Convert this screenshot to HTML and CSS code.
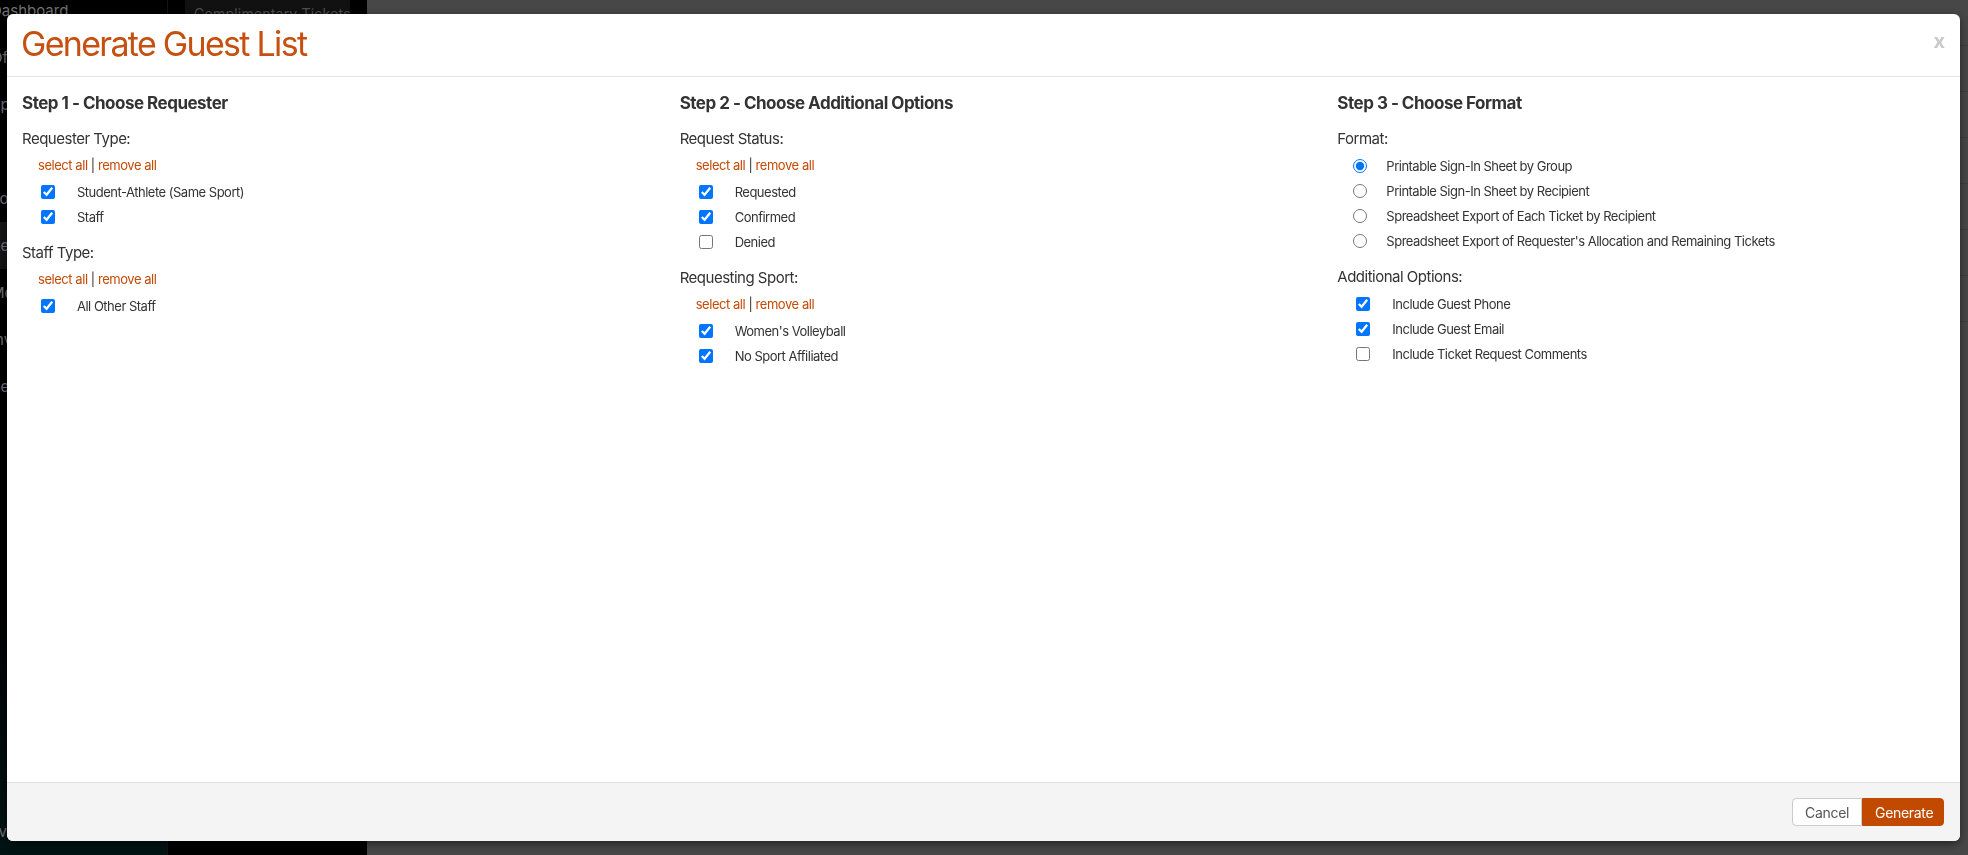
FILE: index.html
```html
<!DOCTYPE html>
<html lang="en">
<head>
<meta charset="utf-8">
<title>Generate Guest List</title>
<link rel="stylesheet" href="styles.css">
</head>
<body>
<div class="page">
  <aside class="sidebar">
    <ul class="side-list">
      <li>Dashboard</li>
      <li>Offline Sales</li>
      <li>Split Tickets</li>
      <li></li>
      <li>Tools</li>
      <li class="active">Reports</li>
      <li>Members</li>
      <li>Inventory</li>
      <li>Settings</li>
    </ul>
    <div class="side-foot">Overview</div>
  </aside>
  <nav class="subnav">
    <div class="tab">Complimentary Tickets</div>
  </nav>
  <main class="main">
    <div class="bg-row"></div>
    <div class="bg-row"></div>
    <div class="bg-row"></div>
    <div class="bg-row"></div>
    <div class="bg-row"></div>
    <div class="bg-row"></div>
    <div class="bg-row"></div>
  </main>
</div>

<div class="modal">
  <header class="modal-header">
    <h1 class="modal-title">Generate Guest List</h1>
    <span class="close">x</span>
  </header>
  <section class="modal-body">
    <div class="col">
      <h4 class="step">Step 1 - Choose Requester</h4>
      <div class="group">
        <div class="group-label">Requester Type:</div>
        <div class="links"><a>select all</a> <span class="bar">|</span> <a>remove all</a></div>
        <ul class="opts">
          <li><input type="checkbox" checked><span>Student-Athlete (Same Sport)</span></li>
          <li><input type="checkbox" checked><span>Staff</span></li>
        </ul>
      </div>
      <div class="group">
        <div class="group-label">Staff Type:</div>
        <div class="links"><a>select all</a> <span class="bar">|</span> <a>remove all</a></div>
        <ul class="opts">
          <li><input type="checkbox" checked><span>All Other Staff</span></li>
        </ul>
      </div>
    </div>
    <div class="col">
      <h4 class="step">Step 2 - Choose Additional Options</h4>
      <div class="group">
        <div class="group-label">Request Status:</div>
        <div class="links"><a>select all</a> <span class="bar">|</span> <a>remove all</a></div>
        <ul class="opts">
          <li><input type="checkbox" checked><span>Requested</span></li>
          <li><input type="checkbox" checked><span>Confirmed</span></li>
          <li><input type="checkbox"><span>Denied</span></li>
        </ul>
      </div>
      <div class="group">
        <div class="group-label">Requesting Sport:</div>
        <div class="links"><a>select all</a> <span class="bar">|</span> <a>remove all</a></div>
        <ul class="opts">
          <li><input type="checkbox" checked><span>Women's Volleyball</span></li>
          <li><input type="checkbox" checked><span>No Sport Affiliated</span></li>
        </ul>
      </div>
    </div>
    <div class="col">
      <h4 class="step">Step 3 - Choose Format</h4>
      <div class="group">
        <div class="group-label">Format:</div>
        <ul class="opts radios no-links">
          <li><input type="radio" name="fmt" checked><span>Printable Sign-In Sheet by Group</span></li>
          <li><input type="radio" name="fmt"><span>Printable Sign-In Sheet by Recipient</span></li>
          <li><input type="radio" name="fmt"><span>Spreadsheet Export of Each Ticket by Recipient</span></li>
          <li><input type="radio" name="fmt"><span>Spreadsheet Export of Requester's Allocation and Remaining Tickets</span></li>
        </ul>
      </div>
      <div class="group">
        <div class="group-label">Additional Options:</div>
        <ul class="opts no-links">
          <li><input type="checkbox" checked><span>Include Guest Phone</span></li>
          <li><input type="checkbox" checked><span>Include Guest Email</span></li>
          <li><input type="checkbox"><span>Include Ticket Request Comments</span></li>
        </ul>
      </div>
    </div>
  </section>
  <footer class="modal-footer">
    <div class="btn-group">
      <button class="btn btn-cancel">Cancel</button>
      <button class="btn btn-primary">Generate</button>
    </div>
  </footer>
</div>
</body>
</html>
```
FILE: styles.css
```css
* { box-sizing: border-box; }
html, body {
  margin: 0;
  padding: 0;
  width: 1968px;
  height: 855px;
  overflow: hidden;
  font-family: "Inter", "Liberation Sans", sans-serif;
}

/* ---------- background page (dimmed) ---------- */
.page {
  display: flex;
  height: 855px;
}
.sidebar {
  width: 167px;
  background: linear-gradient(to bottom, #000 0%, #000 70%, #021414 100%);
  display: flex;
  flex-direction: column;
  justify-content: space-between;
  overflow: hidden;
}
.side-list {
  list-style: none;
  margin: -13px 0 0 0;
  padding: 0;
}
.side-list li {
  height: 47px;
  line-height: 47px;
  font-size: 15px;
  color: #727272;
  text-indent: -9px;
  white-space: nowrap;
}
.side-list li.active { background: #151515; }
.side-foot {
  height: 47px;
  line-height: 47px;
  font-size: 15px;
  color: #727272;
  text-indent: -13px;
}
.subnav {
  width: 200px;
  background: #000;
  border-left: 1px solid #141414;
  padding: 0 17px;
}
.tab {
  background: #111;
  color: #4f4f4f;
  font-size: 14px;
  letter-spacing: 0.2px;
  white-space: nowrap;
  overflow: hidden;
  height: 40px;
  line-height: 40px;
  padding-left: 9px;
  margin-top: -6px;
}
.main {
  flex: 1;
  background: #474747;
  display: flex;
  flex-direction: column;
}
.bg-row {
  height: 46px;
  border-bottom: 1px solid #3d3d3d;
}

/* ---------- modal ---------- */
.modal {
  position: fixed;
  left: 7px;
  top: 14px;
  right: 8px;
  bottom: 14px;
  background: #fff;
  border-radius: 6px;
  box-shadow: 0 3px 9px rgba(0,0,0,0.5);
  display: flex;
  flex-direction: column;
  overflow: hidden;
  color: #333;
}
.modal-header {
  display: flex;
  justify-content: space-between;
  align-items: flex-start;
  padding: 11px 15px 13px 14px;
  border-bottom: 1px solid #e5e5e5;
}
.modal-title {
  margin: 0;
  font-size: 34px;
  line-height: 38px;
  font-weight: 400;
  letter-spacing: -1.7px;
  color: #c5500f;
}
.close {
  font-size: 20px;
  line-height: 20px;
  font-weight: 700;
  color: #c9c9c9;
  margin-top: 6px;
}

.modal-body {
  flex: 1;
  padding: 16px 15px 15px;
  display: grid;
  grid-template-columns: repeat(3, 1fr);
  column-gap: 50px;
  align-content: start;
}
.step {
  margin: 0;
  font-size: 17px;
  line-height: 20px;
  font-weight: 700;
  letter-spacing: -0.5px;
  color: #333;
}
.group { margin-top: 12px; }
.step + .group { margin-top: 14px; }
.group-label {
  padding-top: 2px;
  font-size: 15px;
  line-height: 20px;
  letter-spacing: -0.5px;
  color: #333;
}
.links {
  margin-top: 6px;
  padding-left: 16px;
  font-size: 13px;
  line-height: 20px;
  letter-spacing: -0.45px;
  color: #333;
}
.links a { color: #c44a06; }
.bar { color: #333; }

.opts {
  list-style: none;
  margin: 4px 0 0 0;
  padding: 0;
}
.opts.no-links { margin-top: 4px; }
.opts li {
  height: 25px;
  display: flex;
  align-items: center;
  padding-left: 19px;
  font-size: 13px;
  letter-spacing: -0.5px;
  color: #333;
}
.opts input {
  margin: 0;
  width: 14px;
  height: 14px;
  flex: none;
}
.opts li span { margin-left: 22px; }
.opts.radios li { padding-left: 16px; }
.opts.radios li span { margin-left: 19px; }

.modal-footer {
  background: #f4f4f4;
  border-top: 1px solid #e0e0e0;
  padding: 15px 16px 15px 15px;
  display: flex;
  justify-content: flex-end;
}
.btn-group { display: flex; }
.btn {
  font-family: "Inter", "Liberation Sans", sans-serif;
  font-size: 14px;
  letter-spacing: -0.3px;
  height: 28px;
  padding: 0 12px;
  border: 1px solid #ccc;
  cursor: pointer;
}
.btn-cancel {
  background: #fff;
  color: #555;
  border-radius: 4px 0 0 4px;
  width: 70px;
}
.btn-primary {
  background: #c24a00;
  border-color: #c24a00;
  color: #fff;
  border-radius: 0 4px 4px 0;
  width: 82px;
}
```
